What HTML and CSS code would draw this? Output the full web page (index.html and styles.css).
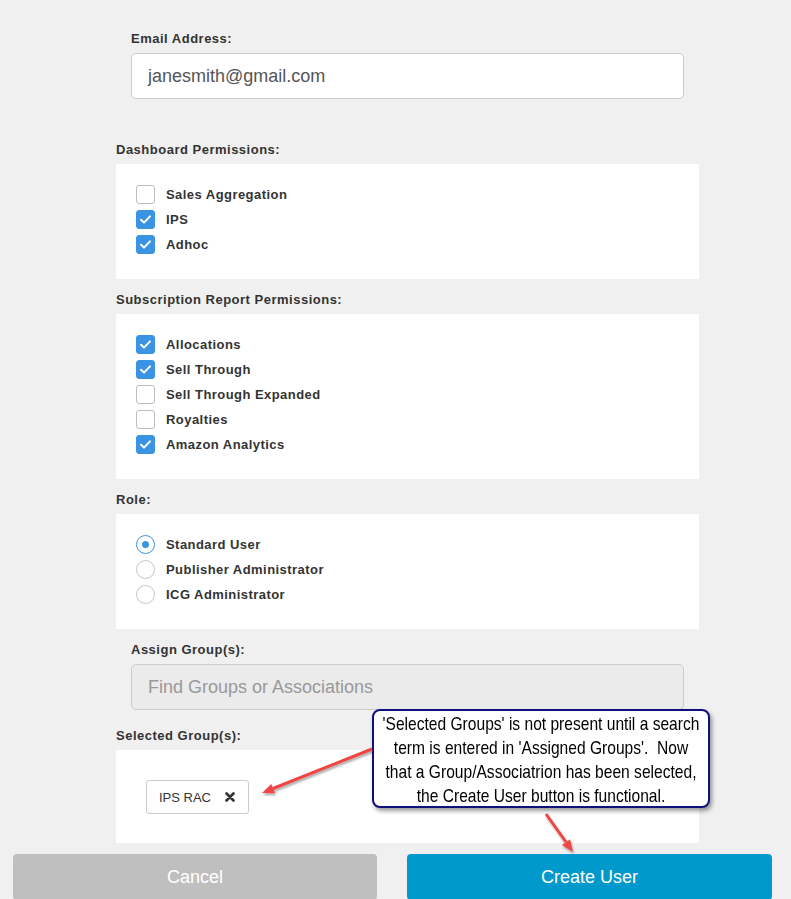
FILE: index.html
```html
<!DOCTYPE html>
<html>
<head>
<meta charset="utf-8">
<link rel="stylesheet" href="styles.css">
</head>
<body>
<div class="page">
  <div class="field field-email">
    <div class="label">Email Address:</div>
    <div class="input">janesmith@gmail.com</div>
  </div>

  <div class="section">
    <div class="label">Dashboard Permissions:</div>
    <div class="panel">
      <div class="row"><span class="box"></span><span class="text">Sales Aggregation</span></div>
      <div class="row"><span class="box checked"><svg viewBox="0 0 19 19"><path d="M5 9.8 L8 12.6 L14 6.4" /></svg></span><span class="text">IPS</span></div>
      <div class="row"><span class="box checked"><svg viewBox="0 0 19 19"><path d="M5 9.8 L8 12.6 L14 6.4" /></svg></span><span class="text">Adhoc</span></div>
    </div>
  </div>

  <div class="section">
    <div class="label">Subscription Report Permissions:</div>
    <div class="panel">
      <div class="row"><span class="box checked"><svg viewBox="0 0 19 19"><path d="M5 9.8 L8 12.6 L14 6.4" /></svg></span><span class="text">Allocations</span></div>
      <div class="row"><span class="box checked"><svg viewBox="0 0 19 19"><path d="M5 9.8 L8 12.6 L14 6.4" /></svg></span><span class="text">Sell Through</span></div>
      <div class="row"><span class="box"></span><span class="text">Sell Through Expanded</span></div>
      <div class="row"><span class="box"></span><span class="text">Royalties</span></div>
      <div class="row"><span class="box checked"><svg viewBox="0 0 19 19"><path d="M5 9.8 L8 12.6 L14 6.4" /></svg></span><span class="text">Amazon Analytics</span></div>
    </div>
  </div>

  <div class="section">
    <div class="label">Role:</div>
    <div class="panel">
      <div class="row"><span class="radio selected"></span><span class="text">Standard User</span></div>
      <div class="row"><span class="radio"></span><span class="text">Publisher Administrator</span></div>
      <div class="row"><span class="radio"></span><span class="text">ICG Administrator</span></div>
    </div>
  </div>

  <div class="field field-assign">
    <div class="label">Assign Group(s):</div>
    <div class="input input-disabled">Find Groups or Associations</div>
  </div>

  <div class="section">
    <div class="label">Selected Group(s):</div>
    <div class="panel panel-chips">
      <div class="chip"><span>IPS RAC</span><svg class="chip-x" viewBox="0 0 10 10"><path d="M1.5 1.5 L8.5 8.5 M8.5 1.5 L1.5 8.5" /></svg></div>
    </div>
  </div>

  <div class="buttons">
    <div class="btn btn-cancel">Cancel</div>
    <div class="btn btn-create">Create User</div>
  </div>

  <div class="callout">
    <div class="callout-text">'Selected Groups' is not present until a search<br>term is entered in 'Assigned Groups'.&nbsp; Now<br>that a Group/Associatrion has been selected,<br>the Create User button is functional.</div>
  </div>

  <svg class="arrows" viewBox="0 0 791 899">
    <defs>
      <filter id="sh" x="-20%" y="-20%" width="140%" height="140%">
        <feDropShadow dx="1" dy="2" stdDeviation="1.2" flood-color="#000" flood-opacity="0.35"/>
      </filter>
    </defs>
    <g filter="url(#sh)">
      <line x1="372" y1="749" x2="273" y2="788.5" class="arrow-line"/>
      <polygon points="262,793 275,793.2 271.3,783.9" class="arrow-head"/>
      <line x1="546" y1="814" x2="566" y2="842" class="arrow-line"/>
      <polygon points="573,852 562,845.1 570.1,839.3" class="arrow-head"/>
    </g>
  </svg>
</div>
</body>
</html>
```

FILE: styles.css
```css
html, body {
  margin: 0;
  padding: 0;
  overflow: hidden;
  background: #f0f0f0;
}

body {
  font-family: "Liberation Sans", Arial, sans-serif;
  color: #333;
}

.page {
  position: relative;
  width: 791px;
  height: 899px;
  padding-top: 31px;
  box-sizing: border-box;
}

.label {
  font-size: 13px;
  line-height: 15px;
  font-weight: bold;
  letter-spacing: 0.5px;
  color: #333;
  margin-bottom: 7px;
}

.field {
  margin-left: 131px;
  width: 553px;
}

.field-email {
  margin-bottom: 43px;
}

.field-assign {
  margin-top: 13px;
}

.input {
  height: 46px;
  box-sizing: border-box;
  border: 1px solid #cccccc;
  border-radius: 5px;
  background: #ffffff;
  padding-left: 16px;
  font-size: 18px;
  line-height: 44px;
  color: #555;
}

.input-disabled {
  background: #ebebeb;
  color: #999;
}

.section {
  margin-left: 116px;
  width: 583px;
  margin-bottom: 13px;
}

.field-assign + .section {
  margin-top: 18px;
  margin-bottom: 0;
}

.panel {
  background: #ffffff;
  padding: 18px 20px 22px;
}

.row {
  display: flex;
  align-items: center;
  height: 25px;
}

.text {
  margin-left: 11px;
  font-size: 13px;
  font-weight: bold;
  letter-spacing: 0.45px;
  color: #333;
}

.box {
  width: 19px;
  height: 19px;
  box-sizing: border-box;
  border: 1px solid #bdbdbd;
  border-radius: 3px;
  background: #fff;
  flex: none;
}

.box.checked {
  background: #3a93e3;
  border-color: #3a93e3;
}

.box svg {
  display: block;
  width: 19px;
  height: 19px;
  margin: -1px;
}

.box svg path {
  fill: none;
  stroke: #ffffff;
  stroke-width: 2;
  stroke-linecap: round;
  stroke-linejoin: round;
}

.radio {
  width: 19px;
  height: 19px;
  box-sizing: border-box;
  border: 1px solid #c4c4c4;
  border-radius: 50%;
  background: #fff;
  flex: none;
  display: flex;
  align-items: center;
  justify-content: center;
}

.radio.selected {
  border-color: #3a93e3;
}

.radio.selected::after {
  content: "";
  width: 7px;
  height: 7px;
  border-radius: 50%;
  background: #3a93e3;
}

.panel-chips {
  padding: 30px 30px 29px;
}

.chip {
  display: inline-flex;
  align-items: center;
  height: 34px;
  box-sizing: border-box;
  border: 1px solid #cccccc;
  border-radius: 3px;
  padding: 0 13px 0 12px;
  font-size: 13px;
  color: #333;
}

.chip-x {
  width: 10px;
  height: 10px;
  margin-left: 14px;
}

.chip-x path {
  stroke: #333;
  stroke-width: 2.6;
  stroke-linecap: round;
}

.buttons {
  display: flex;
  gap: 30px;
  margin-top: 11px;
  margin-left: 13px;
}

.btn {
  height: 46px;
  border-radius: 4px;
  color: #ffffff;
  font-size: 18px;
  line-height: 46px;
  text-align: center;
}

.btn-cancel {
  width: 364px;
  background: #bfbfbf;
}

.btn-create {
  width: 365px;
  background: #0099cc;
}

.callout {
  position: absolute;
  left: 372px;
  top: 709px;
  width: 338px;
  height: 99px;
  box-sizing: border-box;
  border: 2px solid #10107a;
  border-radius: 8px;
  background: #ffffff;
  box-shadow: 2px 3px 4px rgba(0, 0, 0, 0.4);
  padding-top: 1px;
  overflow: hidden;
}

.callout-text {
  width: 420px;
  margin-left: -43px;
  text-align: center;
  white-space: nowrap;
  font-size: 19px;
  line-height: 24px;
  color: #000;
  transform: scaleX(0.82);
  transform-origin: center;
}

.arrows {
  position: absolute;
  left: 0;
  top: 0;
  width: 791px;
  height: 899px;
  pointer-events: none;
}

.arrow-line {
  stroke: #ee4444;
  stroke-width: 3;
}

.arrow-head {
  fill: #ee4444;
}
```
